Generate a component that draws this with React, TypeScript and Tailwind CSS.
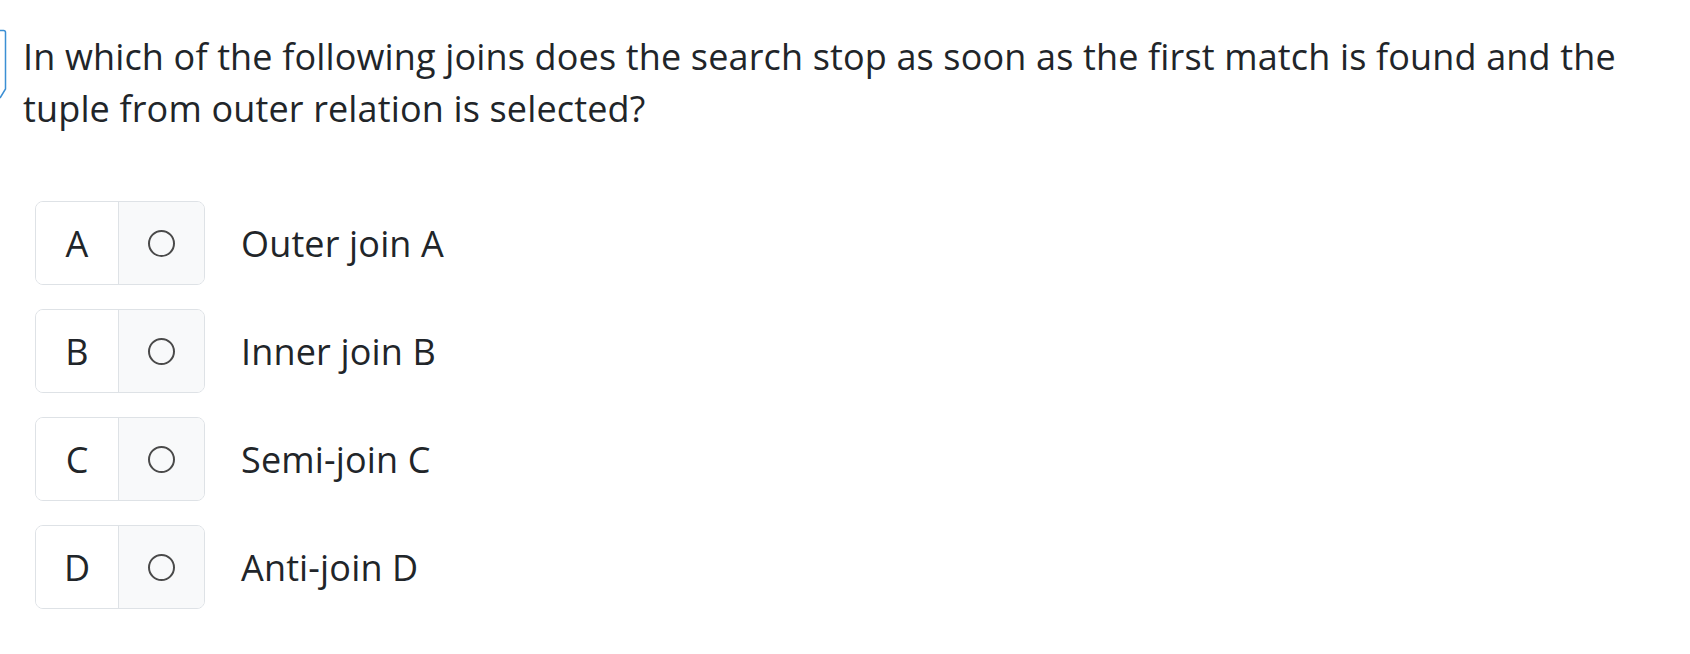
import React from "react";

const options = [
  { key: "A", label: "Outer join A" },
  { key: "B", label: "Inner join B" },
  { key: "C", label: "Semi-join C" },
  { key: "D", label: "Anti-join D" },
];

function Marker() {
  return (
    <svg
      className="absolute left-0 top-[29px]"
      width="8"
      height="72"
      viewBox="0 0 8 72"
      fill="none"
    >
      <path
        d="M0 1.5 H3.5 Q5.5 1.5 5.5 3.5 V60 L0 69"
        stroke="#3b8fd4"
        strokeWidth="1.5"
      />
    </svg>
  );
}

export default function App() {
  return (
    <div
      className="relative min-h-[654px] w-full bg-white text-[#212529]"
      style={{ fontFamily: '"Open Sans", "Noto Sans", sans-serif' }}
    >
      <Marker />
      <div className="pl-[23px] pr-6 pt-[31px]">
        <p className="text-[36px] leading-[52px] tracking-[0.15px]">
          In which of the following joins does the search stop as soon as the first match is found and the
          <br />
          tuple from outer relation is selected?
        </p>

        <div className="mt-[66px] ml-[12px] flex flex-col gap-[24px]">
          {options.map((o) => (
            <div key={o.key} className="flex items-center">
              <div className="flex h-[84px] w-[170px] overflow-hidden rounded-[8px] border border-[#dee2e6]">
                <div className="flex w-[83px] items-center justify-center border-r border-[#dee2e6] bg-white text-[36px] pt-[2px]">
                  {o.key}
                </div>
                <div className="flex flex-1 items-center justify-center bg-[#f8f9fa]">
                  <span className="block h-[27px] w-[27px] rounded-full border-2 border-[#4a4a4a]" />
                </div>
              </div>
              <span className="ml-[36px] text-[36px] leading-[52px] tracking-[0.15px] pt-[2px]">{o.label}</span>
            </div>
          ))}
        </div>
      </div>
    </div>
  );
}
